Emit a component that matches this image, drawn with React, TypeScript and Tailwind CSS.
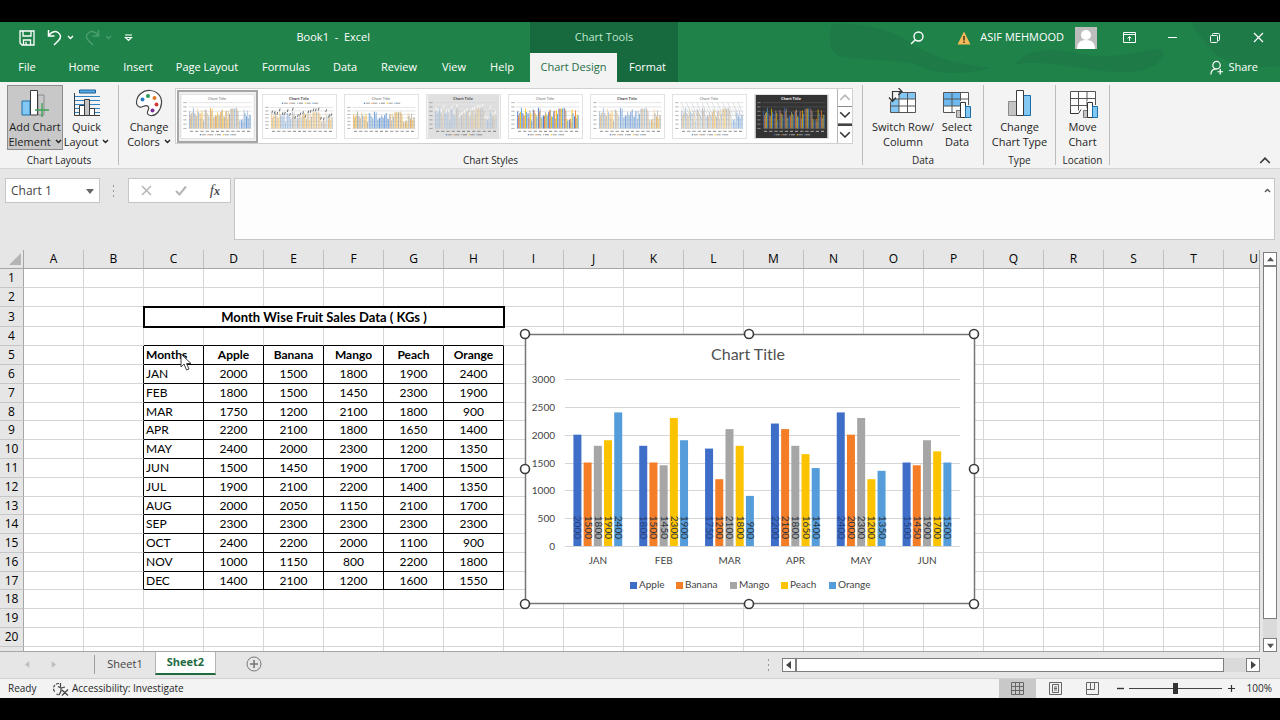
import type { ReactNode } from "react";
import clsx from "clsx";

const SERIES = [
  { name: "Apple", color: "#3e6ec8" },
  { name: "Banana", color: "#f47d28" },
  { name: "Mango", color: "#a6a6a6" },
  { name: "Peach", color: "#fcc400" },
  { name: "Orange", color: "#549dda" },
];

const SALES = [
  { month: "JAN", values: [2000, 1500, 1800, 1900, 2400] },
  { month: "FEB", values: [1800, 1500, 1450, 2300, 1900] },
  { month: "MAR", values: [1750, 1200, 2100, 1800, 900] },
  { month: "APR", values: [2200, 2100, 1800, 1650, 1400] },
  { month: "MAY", values: [2400, 2000, 2300, 1200, 1350] },
  { month: "JUN", values: [1500, 1450, 1900, 1700, 1500] },
  { month: "JUL", values: [1900, 2100, 2200, 1400, 1350] },
  { month: "AUG", values: [2000, 2050, 1150, 2100, 1700] },
  { month: "SEP", values: [2300, 2300, 2300, 2300, 2300] },
  { month: "OCT", values: [2400, 2200, 2000, 1100, 900] },
  { month: "NOV", values: [1000, 1150, 800, 2200, 1800] },
  { month: "DEC", values: [1400, 2100, 1200, 1600, 1550] },
];

const COLUMNS = "ABCDEFGHIJKLMNOPQRSTU".split("");
const ROWS = Array.from({ length: 21 }, (_, i) => i + 1);

const TABS = [
  { label: "File", width: "w-[54px]" },
  { label: "Home", width: "w-[60px]" },
  { label: "Insert", width: "w-[48px]" },
  { label: "Page Layout", width: "w-[90px]" },
  { label: "Formulas", width: "w-[68px]" },
  { label: "Data", width: "w-[50px]" },
  { label: "Review", width: "w-[58px]" },
  { label: "View", width: "w-[52px]" },
  { label: "Help", width: "w-[44px]" },
];

/* ---------- small icons ---------- */

function Chevron({ className, up }: { className?: string; up?: boolean }) {
  return (
    <svg viewBox="0 0 10 6" className={className} fill="none" stroke="currentColor" strokeWidth="1.3">
      <path d={up ? "M1 5l4-4 4 4" : "M1 1l4 4 4-4"} />
    </svg>
  );
}

function SmallChevron({ className, up }: { className?: string; up?: boolean }) {
  return (
    <svg width="7" height="5" viewBox="0 0 7 5" className={className} fill="none" stroke="currentColor" strokeWidth="1.400">
      <path d={up ? "M1 4l2.500-2.500L6 4" : "M1 1l2.500 2.500L6 1"} />
    </svg>
  );
}

function Triangle({ dir, className }: { dir: "up" | "down" | "left" | "right"; className?: string }) {
  const paths = {
    up: "M0 6h8L4 1z",
    down: "M0 2h8L4 7z",
    left: "M6 0v8L1 4z",
    right: "M2 0v8l5-4z",
  };
  return (
    <svg viewBox="0 0 8 8" className={className} fill="currentColor">
      <path d={paths[dir]} />
    </svg>
  );
}

function SaveIcon() {
  return (
    <svg width="16" height="16" viewBox="0 0 16 16" fill="none" stroke="currentColor" strokeWidth="1.3">
      <path d="M1 1h14v14H3l-2-2z" />
      <path d="M4 1v5h8V1M4.500 15v-5h7v5M7 15v-3" />
    </svg>
  );
}

function UndoIcon({ flip }: { flip?: boolean }) {
  return (
    <svg width="15" height="17" viewBox="0 0 15 17" fill="none" stroke="currentColor" strokeWidth="1.5" className={flip ? "-scale-x-100" : ""}>
      <path d="M1.500 1v6h6" />
      <path d="M1.500 7C4 3 8 1.500 11 3.500s3.500 5 .5 8L7 16" />
    </svg>
  );
}

/* ---------- ribbon icons ---------- */

function AddElementIcon() {
  return (
    <svg width="30" height="30" viewBox="0 0 30 30" fill="none">
      <path d="M2 13h8v14H2z" fill="#83c7f5" stroke="#1c6ea8" />
      <path d="M18 7h6v20h-6z" fill="#c8c8c8" stroke="#8a8a8a" />
      <path d="M10.500 2.500h7V27h-7z" fill="#fff" stroke="#3b3b3b" />
      <path d="M22 15v14M15 22h14" stroke="#3fa357" strokeWidth="1.400" />
    </svg>
  );
}

function QuickLayoutIcon() {
  return (
    <svg width="30" height="30" viewBox="0 0 30 30" fill="none">
      <path d="M7.500 2h16v3h-16z" fill="#5aaeea" stroke="#1c5d92" />
      <path d="M3 8.500h25M3 12.500h25M3 16.500h25M3 20.500h25M3 24.500h25" stroke="#2e84c4" />
      <path d="M2.500 5v22.500H28" stroke="#3b3b3b" />
      <path d="M7.500 17.500h5v10h-5zM17.500 20.500h5v7h-5z" fill="#fff" stroke="#3b3b3b" />
      <path d="M12.500 11.500h5v16h-5z" fill="#c4c4c4" stroke="#3b3b3b" />
    </svg>
  );
}

function PaletteIcon() {
  return (
    <svg width="30" height="30" viewBox="0 0 30 30" fill="none">
      <path
        d="M2.500 14C3 7 9 2 16 2.500S28 8 27.500 15 22 28.500 16.500 27.500c-3-.6-4-2.500-2.500-5 1.300-2 1-4.500-1.500-4.800C9.500 17.400 8 20 5.500 19 3.300 18 2.400 16 2.500 14z"
        fill="#fff"
        stroke="#444"
        strokeWidth="1.200"
      />
      <circle cx="8.500" cy="11.500" r="2" fill="#2a7ec2" />
      <circle cx="14" cy="8" r="2" fill="#2e9b57" />
      <circle cx="20.500" cy="10" r="2" fill="#dd7a26" />
      <circle cx="22.500" cy="16.500" r="2" fill="#d33b3b" />
      <circle cx="18.500" cy="22.500" r="2" fill="#7a2f96" />
    </svg>
  );
}

function SwitchIcon() {
  return (
    <svg width="30" height="30" viewBox="0 0 30 30" fill="none">
      <path d="M3 5h25v19H3z" fill="#fff" />
      <path d="M11 5h17v6H11zM3 11h8v13H3z" fill="#83c7f5" />
      <path d="M2.500 4.500h25v20h-25zM2.500 11h25M2.500 18h25M11 4.500v20M19.500 4.500v20" stroke="#555" />
      <path d="M0 0h15L0 16z" fill="#f3f3f3" />
      <path d="M4.500 13V3.500H14M1 9.500l3.500 4 3.500-4M10.500 0l3.500 3.500L10.500 7" stroke="#333" strokeWidth="1.200" />
    </svg>
  );
}

function MiniBars({ x, y }: { x: number; y: number }) {
  return (
    <g transform={`translate(${x} ${y})`}>
      <path d="M-1 6H4V-1h6v4h6v14H-1z" fill="#f3f3f3" />
      <path d="M.5 8.500h4v7h-4z" fill="#c4c4c4" stroke="#777" />
      <path d="M4.500.5h5v15h-5z" fill="#fff" stroke="#333" />
      <path d="M9.500 4.500h5v11h-5z" fill="#83c7f5" stroke="#1c6ea8" />
    </g>
  );
}

function SelectDataIcon() {
  return (
    <svg width="30" height="30" viewBox="0 0 30 30" fill="none">
      <path d="M2 5h25v19H2z" fill="#fff" />
      <path d="M2 5h17v13H2z" fill="#6db8ee" />
      <path d="M1.500 4.500h25v20h-25zM1.500 11h25M1.500 18h25M10 4.500v20M18.500 4.500v20" stroke="#555" />
      <MiniBars x={14} y={14} />
    </svg>
  );
}

function ChartTypeIcon() {
  return (
    <svg width="30" height="30" viewBox="0 0 30 30" fill="none">
      <path d="M3.500 13.500h8v14h-8z" fill="#c4c4c4" stroke="#8a8a8a" />
      <path d="M18.500 7.500h7v20h-7z" fill="#83c7f5" stroke="#1c6ea8" />
      <path d="M11.500 2.500h7v25h-7z" fill="#fff" stroke="#3b3b3b" />
    </svg>
  );
}

function MoveChartIcon() {
  return (
    <svg width="30" height="30" viewBox="0 0 30 30" fill="none">
      <path d="M2.500 3.500h25v16l-15 5-2 1h-8z" fill="#fff" />
      <path d="M2.500 25.500v-22h25v20M2.500 10.500h25M2.500 17.500h25M10.500 3.500v19M19 3.500v20" stroke="#555" />
      <path d="M2.500 21.500v4h8l2.500-4" stroke="#333" />
      <MiniBars x={15} y={14} />
    </svg>
  );
}

/* ---------- chart style gallery ---------- */

// one letter per month: g = gold, b = blue, n = neutral
const TONES: Record<string, string[]> = {
  g: ["#e9a23b", "#b8b0a4", "#f3c04d", "#f0cf8a", "#9a9a9a"],
  b: ["#4f86cf", "#a9c4e6", "#7ba9dd", "#b9bfc8", "#5b9bd5"],
  n: ["#8f9cb3", "#dcb27c", "#b3b3b3", "#e6cf94", "#8db4da"],
};

type StyleProps = {
  name: string;
  tones?: string;
  bg?: string;
  ink?: string;
  line?: string;
  opacity?: number;
  bold?: boolean;
  legendTop?: boolean;
  hatch?: boolean;
  callouts?: string;
};

const STYLES: StyleProps[] = [
  { name: "Style 1", tones: "nngnggggnnbb", opacity: 0.9 },
  { name: "Style 2", tones: "ggbbnnggggng", opacity: 0.7, bold: true, legendTop: true, callouts: "#555555" },
  { name: "Style 3", tones: "gngbbbbngggg", opacity: 0.9, legendTop: true },
  { name: "Style 4", tones: "bnbbnnnggnbn", bg: "#e0e0e0", opacity: 0.4, bold: true, callouts: "#ffffff" },
  { name: "Style 5", opacity: 1 },
  { name: "Style 6", tones: "nngnbbbbnngg", opacity: 0.8, bold: true },
  { name: "Style 7", tones: "nnnnnngngnbb", opacity: 0.7, hatch: true },
  { name: "Style 8", bg: "#333333", ink: "#eeeeee", line: "#5c5c5c", opacity: 0.8, bold: true },
];

function StyleThumb({ tones, bg = "#ffffff", ink = "#555555", line = "#d0d0d0", opacity = 1, bold, legendTop, hatch, callouts }: StyleProps) {
  const top = legendTop ? 13 : 8;
  const scale = (35 - top) / 3000;
  return (
    <svg viewBox="0 0 75 45" className="block h-[45px] w-[75px] border border-[#e2e2e2]">
      <rect width="75" height="45" fill={bg} />
      <text x="37" y="5" fontSize="4" textAnchor="middle" fill={ink} fontWeight={bold ? 700 : 400}>
        Chart Title
      </text>
      {[0, 1, 2, 3, 4, 5, 6].map((i) => (
        <g key={i}>
          <path d={`M7 ${35 - i * 500 * scale}H73`} stroke={line} strokeWidth="0.600" />
          <path d={`M2 ${35 - i * 500 * scale}h3`} stroke={ink} strokeWidth="0.800" strokeDasharray="0.7 0.4" />
        </g>
      ))}
      <g opacity={opacity}>
        {SALES.map((row, m) =>
          row.values.map((v, s) => (
            <rect
              key={`${m}-${s}`}
              x={8 + m * 5.4 + s * 0.95}
              y={35 - v * scale}
              width="0.900"
              height={v * scale}
              fill={tones ? TONES[tones[m]][s] : SERIES[s].color}
            />
          ))
        )}
      </g>
      {hatch && (
        <g stroke="#a8afb8" strokeWidth="0.400">
          {Array.from({ length: 12 }, (_, i) => (
            <path key={i} d={`M${8 + i * 5.4} 8l6 14M${8 + i * 5.4} 14l5 12`} />
          ))}
        </g>
      )}
      {callouts &&
        SALES.map((row, m) => (
          <path
            key={row.month}
            d={`M${8.5 + m * 5.4} ${34 - row.values[0] * scale}l.8-3M${11 + m * 5.4} ${34 - row.values[3] * scale}l.8-3`}
            stroke={callouts}
            strokeWidth="0.900"
          />
        ))}
      {SALES.map((row, m) => (
        <path key={row.month} d={`M${9 + m * 5.4} 38h3`} stroke={ink} strokeWidth="1" strokeDasharray="0.8 0.3" />
      ))}
      {SERIES.map((s, i) => (
        <g key={s.name}>
          <rect x={19 + i * 8} y={legendTop ? 8 : 41} width="1.200" height="1.200" fill={s.color} />
          <path d={`M${21 + i * 8} ${legendTop ? 8.6 : 41.6}h4`} stroke={ink} strokeWidth="0.900" strokeDasharray="0.8 0.3" />
        </g>
      ))}
    </svg>
  );
}

/* ---------- ribbon ---------- */

function RibbonButton({ icon, lines, menu, active, className }: { icon: ReactNode; lines: string[]; menu?: boolean; active?: boolean; className?: string }) {
  return (
    <button
      className={clsx(
        "flex h-[65px] flex-col items-center border whitespace-nowrap text-[11px] leading-[15px] text-[#1f1f1f]",
        active ? "border-[#8c8c8c] bg-[#c8c8c8]" : "border-transparent",
        className
      )}
    >
      <span className="flex h-[35px] items-center">{icon}</span>
      <span>{lines[0]}</span>
      <span className="flex items-center gap-1">
        {lines[1]}
        {menu && <SmallChevron />}
      </span>
    </button>
  );
}

function RibbonGroup({ label, className, children }: { label: string; className?: string; children: ReactNode }) {
  return (
    <section className={clsx("my-[3px] flex shrink-0 flex-col border-r border-[#bdbdbd]", className)}>
      <div className="flex">{children}</div>
      <h2 className="mt-[3px] text-center text-[10px] leading-[15px] text-[#1f1f1f]">{label}</h2>
    </section>
  );
}

function Ribbon() {
  return (
    <div className="flex h-[87px] shrink-0 border-b border-[#d4d4d4] bg-[#f3f3f3]">
      <RibbonGroup label="Chart Layouts" className="w-[119px]">
        <RibbonButton icon={<AddElementIcon />} lines={["Add Chart", "Element"]} menu active className="ml-[7px] w-[56px]" />
        <RibbonButton icon={<QuickLayoutIcon />} lines={["Quick", "Layout"]} menu className="w-[47px]" />
      </RibbonGroup>

      <RibbonGroup label="Chart Styles" className="w-[744px]">
        <RibbonButton icon={<PaletteIcon />} lines={["Change", "Colors"]} menu className="mr-[-4px] w-[60px]" />
        <div className="mt-[3px] flex h-[56px] w-[678px] justify-between border border-[#d0d0d0] bg-white">
          <div className="flex gap-px pl-px">
            {STYLES.map((style, i) => (
              <button
                key={style.name}
                aria-label={style.name}
                className={clsx("flex h-[53px] w-[81px] items-center justify-center self-center border-2", i === 0 ? "border-[#a6a6a6] bg-[#f0f0f0]" : "border-transparent")}
              >
                <StyleThumb {...style} />
              </button>
            ))}
          </div>
          <div className="flex w-[15px] flex-col divide-y divide-[#8c8c8c] border-l border-[#b5b5b5] text-[#333333]">
            <button aria-label="Previous styles" className="flex flex-1 items-center justify-center text-[#b5b5b5]">
              <Chevron up className="w-[12px]" />
            </button>
            <button aria-label="Next styles" className="flex flex-1 items-center justify-center">
              <Chevron className="w-[12px]" />
            </button>
            <button aria-label="More styles" className="flex flex-1 items-center justify-center border-t-2 border-[#444444]">
              <Chevron className="w-[12px]" />
            </button>
          </div>
        </div>
      </RibbonGroup>

      <RibbonGroup label="Data" className="w-[121px]">
        <RibbonButton icon={<SwitchIcon />} lines={["Switch Row/", "Column"]} className="ml-[4px] w-[72px]" />
        <RibbonButton icon={<SelectDataIcon />} lines={["Select", "Data"]} className="w-[36px]" />
      </RibbonGroup>
      <RibbonGroup label="Type" className="w-[72px]">
        <RibbonButton icon={<ChartTypeIcon />} lines={["Change", "Chart Type"]} className="w-full" />
      </RibbonGroup>
      <RibbonGroup label="Location" className="w-[54px]">
        <RibbonButton icon={<MoveChartIcon />} lines={["Move", "Chart"]} className="w-full" />
      </RibbonGroup>

      <button aria-label="Collapse the ribbon" className="mt-auto mr-[9px] mb-1 ml-auto flex text-[#333333]">
        <Chevron up className="w-[12px]" />
      </button>
    </div>
  );
}

/* ---------- title bar and tabs ---------- */

function TitleBar() {
  return (
    <header className="relative shrink-0 bg-[#1f8249] text-[11px] text-white">
      {/* theme artwork behind the window controls */}
      <svg viewBox="0 0 460 60" className="absolute top-0 right-0 h-[60px] w-[460px]" fill="#1e7a46">
        <path d="M12 2C28 0 70 4 92 22c20 14 56 22 80 24-30 8-60 6-72-2-16-8-60-4-80-10C8 30 8 12 12 2z" />
        <path d="M196 42c10-16 40-16 66-10 36 8 70-8 80-4 6 8-8 20-30 22-40 2-80-14-116-8z" />
        <path d="M372 0h88v44c-30 4-60-4-70-18-6-8-14-14-18-26z" />
      </svg>

      <div className="relative flex h-[31px]">
        <div className="flex w-[530px] shrink-0 items-center pl-[19px]">
          <button aria-label="Save">
            <SaveIcon />
          </button>
          <button aria-label="Undo" className="ml-3 flex items-center gap-[5px]">
            <UndoIcon />
            <SmallChevron />
          </button>
          <button aria-label="Redo" className="ml-[11px] flex items-center gap-[5px] text-[#4a9d6d]">
            <UndoIcon flip />
            <SmallChevron />
          </button>
          <button aria-label="Customize Quick Access Toolbar" className="ml-3">
            <svg width="9" height="8" viewBox="0 0 9 8" fill="none" stroke="currentColor" strokeWidth="1.200">
              <path d="M1 1h7M1.500 3.500l3 3 3-3z" />
            </svg>
          </button>
          <h1 className="mr-[160px] ml-auto whitespace-pre">Book1  -  Excel</h1>
        </div>
        <div className="flex w-[148px] shrink-0 items-center justify-center bg-[#17693e] text-[#bfe6cd]">Chart Tools</div>
        <div className="flex flex-1 items-center justify-end pr-4">
          <button aria-label="Search" className="mr-[33px]">
            <svg width="14" height="14" viewBox="0 0 14 14" fill="none" stroke="currentColor" strokeWidth="1.400">
              <circle cx="8.500" cy="5.500" r="4.500" />
              <path d="M5.300 8.700L1 13" />
            </svg>
          </button>
          <svg width="14" height="14" viewBox="0 0 14 14" className="mr-[9px]">
            <path d="M7 .5l6.500 13H.5z" fill="#f5b95b" />
            <path d="M7 5v4.500M7 10.500V12" stroke="#3f3414" strokeWidth="1.500" />
          </svg>
          <span className="whitespace-nowrap">ASIF MEHMOOD</span>
          <svg width="22" height="22" viewBox="0 0 22 22" className="mr-[26px] ml-[11px]">
            <rect width="22" height="22" fill="#bdbdbd" />
            <circle cx="11" cy="8" r="5" fill="#fff" />
            <path d="M2 22c0-6 3-9 9-9s9 3 9 9z" fill="#fff" />
          </svg>
          <button aria-label="Ribbon display options" className="mr-[32px]">
            <svg width="13" height="11" viewBox="0 0 13 11" fill="none" stroke="currentColor">
              <path d="M.5.500h12v10H.5zM.5 2.500h12M6.500 9V5M4.500 6.500l2-2 2 2" />
            </svg>
          </button>
          <button aria-label="Minimize" className="mr-[33px]">
            <svg width="9" height="10" viewBox="0 0 9 10" stroke="currentColor">
              <path d="M0 4.500h9" />
            </svg>
          </button>
          <button aria-label="Restore" className="mr-[33px]">
            <svg width="10" height="10" viewBox="0 0 10 10" fill="none" stroke="currentColor">
              <rect x=".5" y="2.500" width="7" height="7" rx="1" />
              <path d="M2.500 2.500V1.500q0-1 1-1h5q1 0 1 1v5q0 1-1 1h-1" />
            </svg>
          </button>
          <button aria-label="Close">
            <svg width="11" height="11" viewBox="0 0 11 11" stroke="currentColor" strokeWidth="1.200">
              <path d="M1 1l9 9M10 1l-9 9" />
            </svg>
          </button>
        </div>
      </div>

      <div className="relative flex h-[29px] whitespace-nowrap">
        <nav className="flex w-[530px] shrink-0">
          {TABS.map((tab) => (
            <button key={tab.label} className={tab.width}>
              {tab.label}
            </button>
          ))}
        </nav>
        <nav className="flex w-[148px] shrink-0 bg-[#17693e]">
          <button className="w-[87px] bg-[#f3f3f3] text-[#1f6f45]">Chart Design</button>
          <button className="w-[61px]">Format</button>
        </nav>
        <button className="mr-[22px] ml-auto flex items-center gap-1">
          <svg width="14" height="16" viewBox="0 0 15 16" fill="none" stroke="currentColor" strokeWidth="1.300">
            <circle cx="7" cy="5" r="4" />
            <path d="M1 15c0-4 2.500-6 6-6M8 12h6M11 9v6" />
          </svg>
          Share
        </button>
      </div>
    </header>
  );
}

/* ---------- formula bar ---------- */

function FormulaBar() {
  return (
    <div className="flex h-[81px] shrink-0 items-start bg-[#e6e6e6] pt-[9px] pr-[5px] pl-[5px]">
      <div className="flex h-[25px] w-[95px] items-center border border-[#c6c6c6] bg-white pr-[5px]">
        <input aria-label="Name Box" defaultValue="Chart 1" className="w-0 flex-1 pl-[5px] text-[12px] text-[#444444] outline-none" />
        <Triangle dir="down" className="w-[8px] text-[#666666]" />
      </div>
      <svg width="28" height="25" viewBox="0 0 28 25" fill="#999">
        <path d="M13 7h1v2h-1zM13 12h1v2h-1zM13 17h1v2h-1z" />
      </svg>
      <div className="flex h-[25px] w-[103px] items-center justify-between border border-[#c6c6c6] bg-white pr-[10px] pl-[12px]">
        <button aria-label="Cancel">
          <svg width="11" height="11" viewBox="0 0 11 11" stroke="#b5b5b5" strokeWidth="1.500">
            <path d="M1 1l9 9M10 1l-9 9" />
          </svg>
        </button>
        <button aria-label="Enter">
          <svg width="12" height="11" viewBox="0 0 12 11" fill="none" stroke="#b5b5b5" strokeWidth="2">
            <path d="M1 6l3.500 3.500L11 1.500" />
          </svg>
        </button>
        <button className="font-['Liberation_Serif',serif] text-[15px] leading-none text-[#444444] italic">
          f<span className="text-[12px] font-bold">x</span>
        </button>
      </div>
      <div className="ml-[3px] flex h-[62px] flex-1 items-start border border-[#c6c6c6] bg-[#fdfdfd] pr-[3px]">
        <textarea aria-label="Formula" className="h-full flex-1 resize-none outline-none" />
        <button aria-label="Collapse formula bar" className="mt-[9px] flex text-[#555555]">
          <SmallChevron up />
        </button>
      </div>
    </div>
  );
}

/* ---------- sheet ---------- */

function rowHeight(row: number) {
  if (row === 3) return "h-[20px]";
  return row === 8 || row === 13 || row === 17 ? "h-[18px]" : "h-[19px]";
}

function cellValue(row: number, col: number) {
  if (row < 5 || row > 17 || col < 2 || col > 7) return null;
  if (row === 5) return col === 2 ? "Months" : SERIES[col - 3].name;
  const sale = SALES[row - 6];
  return col === 2 ? sale.month : sale.values[col - 3];
}

function SheetRow({ row }: { row: number }) {
  const inTable = row >= 5 && row <= 17;
  return (
    <tr className={rowHeight(row)}>
      <th scope="row" className="border-r border-b border-[#a6a6a6] border-b-[#c6c6c6] bg-[#e6e6e6] p-0 font-['Open_Sans',sans-serif] text-[12px] leading-none font-normal">
        {row <= 20 && row}
      </th>
      {COLUMNS.map((letter, col) => {
        if (row === 3 && col > 2 && col < 8) return null;
        if (row === 3 && col === 2) {
          return (
            <td key={letter} colSpan={6} className="p-0 text-center text-[13px] leading-none font-bold outline-2 -outline-offset-1 outline-black">
              Month Wise Fruit Sales Data ( KGs )
            </td>
          );
        }
        const data = inTable && col >= 2 && col <= 7;
        return (
          <td
            key={letter}
            className={clsx(
              "border-r border-b p-0 text-[12px] leading-none whitespace-nowrap",
              data || (inTable && col === 1) ? "border-r-black" : "border-r-[#d6d6d6]",
              data || (row === 4 && col >= 2 && col <= 7) ? "border-b-black" : "border-b-[#d6d6d6]",
              col === 2 ? "pl-[2px]" : "text-center",
              row === 5 && "font-bold"
            )}
          >
            {cellValue(row, col)}
          </td>
        );
      })}
    </tr>
  );
}

// plot area inside the 450 x 270 chart object
const PLOT = { left: 40, right: 435, base: 212, top: 45 };

function ColumnChart() {
  const group = (PLOT.right - PLOT.left) / 6;
  const y = (v: number) => PLOT.base - (v / 3000) * (PLOT.base - PLOT.top);
  const legendX = [105, 151, 205, 256, 304];
  return (
    <svg viewBox="0 0 450 270" className="absolute top-[84px] left-[525px] h-[270px] w-[450px] overflow-visible font-['Lato',sans-serif]">
      <rect x=".5" y=".5" width="449" height="269" fill="#fff" stroke="#767676" strokeWidth="1.500" />
      <text x="223" y="26" fontSize="16" textAnchor="middle" fill="#505050">
        Chart Title
      </text>
      {[0, 500, 1000, 1500, 2000, 2500, 3000].map((v) => (
        <g key={v}>
          <path d={`M${PLOT.left} ${Math.round(y(v)) + 0.5}H${PLOT.right}`} stroke="#d6d6d6" />
          <text x="30" y={y(v) + 4} fontSize="10" textAnchor="end" fill="#444">
            {v}
          </text>
        </g>
      ))}
      {SALES.slice(0, 6).map((sale, m) => {
        const center = PLOT.left + group * (m + 0.5);
        return (
          <g key={sale.month}>
            {sale.values.map((v, s) => {
              const x = center - 24.5 + s * 10.2;
              return (
                <g key={s}>
                  <rect x={x} y={y(v)} width="8" height={PLOT.base - y(v)} fill={SERIES[s].color} />
                  <text transform={`translate(${x + 1} 205) rotate(90)`} fontSize="10" textAnchor="end" fill={s === 0 ? "#27407a" : "#2b3440"}>
                    {v}
                  </text>
                </g>
              );
            })}
            <text x={center} y="230" fontSize="10" textAnchor="middle" fill="#444">
              {sale.month}
            </text>
          </g>
        );
      })}
      {SERIES.map((s, i) => (
        <g key={s.name}>
          <rect x={legendX[i]} y="248" width="7" height="7" fill={s.color} />
          <text x={legendX[i] + 9} y="254" fontSize="10" fill="#444">
            {s.name}
          </text>
        </g>
      ))}
      <g fill="#fff" stroke="#3b3b3b" strokeWidth="1.600">
        {[0, 224, 449].map((cx) =>
          [0, 135, 270].map((cy) => (cx === 224 && cy === 135 ? null : <circle key={`${cx}-${cy}`} cx={cx} cy={cy} r="4.500" />))
        )}
      </g>
    </svg>
  );
}

function Sheet() {
  return (
    <main className="flex min-h-0 flex-1 bg-[#e6e6e6]">
      <div className="relative min-w-0 flex-1 overflow-hidden border-r border-b border-[#a6a6a6] bg-white">
        <table className="w-[1284px] table-fixed border-separate border-spacing-0 font-['Lato',sans-serif] text-black">
          <thead>
            <tr className="h-[19px]">
              <th className="w-[24px] border-r border-b border-[#a6a6a6] bg-[#e6e6e6] p-0">
                <svg viewBox="0 0 12 12" className="ml-auto mr-[2px] h-[12px] w-[12px]" fill="#b5b5b5">
                  <path d="M12 0v12H0z" />
                </svg>
              </th>
              {COLUMNS.map((letter) => (
                <th key={letter} scope="col" className="w-[60px] border-r border-b border-[#a6a6a6] border-r-[#c0c0c0] bg-[#e6e6e6] p-0 font-['Open_Sans',sans-serif] text-[12px] leading-none font-normal">
                  {letter}
                </th>
              ))}
            </tr>
          </thead>
          <tbody>
            {ROWS.map((row) => (
              <SheetRow key={row} row={row} />
            ))}
          </tbody>
        </table>

        <ColumnChart />

        {/* mouse pointer */}
        <svg viewBox="0 0 12 18" className="absolute top-[103px] left-[180px] h-[18px] w-[12px]">
          <path d="M1 1v13l3-3 2.500 6 2.500-1-2.500-5.500H11z" fill="#fff" stroke="#444" />
        </svg>
      </div>

      <div className="flex w-[20px] shrink-0 flex-col items-center pt-[2px]">
        <button aria-label="Scroll up" className="flex h-[14px] w-[14px] items-center justify-center border border-[#7d7d7d] bg-white text-[#555555]">
          <Triangle dir="up" className="w-[7px]" />
        </button>
        <div className="flex w-[14px] flex-1 flex-col bg-[#dadada]">
          <div className="mb-[19px] flex-1 border border-[#7d7d7d] bg-white" />
        </div>
        <button aria-label="Scroll down" className="flex h-[14px] w-[14px] items-center justify-center border border-[#7d7d7d] bg-white text-[#555555]">
          <Triangle dir="down" className="w-[7px]" />
        </button>
      </div>
    </main>
  );
}

/* ---------- bottom bars ---------- */

function SheetTabs() {
  return (
    <div className="flex h-[26px] shrink-0 bg-[#e6e6e6] pr-[20px] text-[11px]">
      <div className="mt-[3px] mb-[4px] flex w-[95px] items-center gap-[19px] border-r border-[#a0a0a0] pl-[24px] text-[#c0c0c0]">
        <button aria-label="Previous sheet">
          <Triangle dir="left" className="w-[7px]" />
        </button>
        <button aria-label="Next sheet">
          <Triangle dir="right" className="w-[7px]" />
        </button>
      </div>
      <button className="mb-[2px] w-[60px] text-[#444444]">Sheet1</button>
      <button className="mb-[3px] w-[61px] border-x border-b-2 border-[#b5b5b5] border-b-[#1e6b41] bg-white font-bold text-[#1e6b41]">Sheet2</button>
      <button aria-label="New sheet" className="mb-[2px] ml-[30px]">
        <svg width="16" height="16" viewBox="0 0 16 16" fill="none" stroke="#777">
          <circle cx="8" cy="8" r="7" />
          <path d="M8 4v8M4 8h8" strokeWidth="1.600" />
        </svg>
      </button>
      <div className="ml-auto flex h-[14px] w-[494px] self-center">
        <svg width="16" height="14" viewBox="0 0 16 14" fill="#999">
          <path d="M2 1h1v2H2zM2 6h1v2H2zM2 11h1v2H2z" />
        </svg>
        <button aria-label="Scroll left" className="flex w-[14px] items-center justify-center border border-[#7d7d7d] bg-white text-[#444444]">
          <Triangle dir="left" className="w-[8px]" />
        </button>
        <div className="flex flex-1 bg-[#dadada]">
          <div className="mr-[22px] flex-1 border border-[#7d7d7d] bg-white" />
        </div>
        <button aria-label="Scroll right" className="flex w-[14px] items-center justify-center border border-[#7d7d7d] bg-white text-[#444444]">
          <Triangle dir="right" className="w-[8px]" />
        </button>
      </div>
    </div>
  );
}

function StatusBar() {
  return (
    <footer className="flex h-[20px] shrink-0 items-center border-t border-[#d0d0d0] bg-[#f3f3f3] pr-2 pl-[8px] text-[10px] text-[#262626]">
      <span className="w-[45px]">Ready</span>
      <button className="flex items-center gap-[3px]">
        <svg width="16" height="14" viewBox="0 0 16 14" fill="none" stroke="#444" strokeWidth="1.200">
          <path d="M6 1.500A5 5 0 0 0 2 10M3.500 12l2 1" strokeDasharray="3 1.200" />
          <path d="M7.500 1v4M5 4.500l3 1.500 4-1M8 6v3l-2 4M9 8l6 5.500M15 7.500L9 13.500" />
        </svg>
        Accessibility: Investigate
      </button>
      <button aria-label="Normal view" className="ml-auto flex h-full w-[37px] items-center justify-center bg-[#c8c8c8]">
        <svg width="13" height="13" viewBox="0 0 13 13" fill="none" stroke="#666">
          <path d="M.5.500h12v12H.5zM.5 4.500h12M.5 8.500h12M4.500.500v12M8.500.500v12" />
        </svg>
      </button>
      <button aria-label="Page layout view" className="flex w-[38px] justify-center">
        <svg width="13" height="13" viewBox="0 0 13 13" fill="none" stroke="#666">
          <path d="M.5.500h12v12H.5zM3.500 2.500h6v8h-6zM5 5h3M5 6.500h3M5 8h3" />
        </svg>
      </button>
      <button aria-label="Page break preview" className="flex w-[37px] justify-center">
        <svg width="13" height="13" viewBox="0 0 13 13" fill="none" stroke="#666">
          <path d="M.5.500h12v12H.5zM4.500.500v7M8.500.500v7M.5 7.500h8" />
        </svg>
      </button>
      <button aria-label="Zoom out" className="flex w-[18px] justify-center">
        <svg width="9" height="9" viewBox="0 0 9 9" stroke="#333" strokeWidth="1.400">
          <path d="M1 4.500h7" />
        </svg>
      </button>
      <input
        type="range"
        aria-label="Zoom"
        defaultValue={50}
        className="h-[12px] w-[93px] appearance-none bg-transparent [&::-webkit-slider-runnable-track]:h-px [&::-webkit-slider-runnable-track]:bg-[#444444] [&::-webkit-slider-thumb]:mt-[-5px] [&::-webkit-slider-thumb]:h-[11px] [&::-webkit-slider-thumb]:w-[5px] [&::-webkit-slider-thumb]:appearance-none [&::-webkit-slider-thumb]:bg-[#333333]"
      />
      <button aria-label="Zoom in" className="flex w-[18px] justify-center">
        <svg width="9" height="9" viewBox="0 0 9 9" stroke="#333" strokeWidth="1.200">
          <path d="M1 4.500h7M4.500 1v7" />
        </svg>
      </button>
      <span className="w-[32px] text-right">100%</span>
    </footer>
  );
}

export default function App() {
  return (
    <div className="flex h-screen flex-col overflow-hidden bg-black py-[22px] font-['Open_Sans',sans-serif]">
      <TitleBar />
      <Ribbon />
      <FormulaBar />
      <Sheet />
      <SheetTabs />
      <StatusBar />
    </div>
  );
}
